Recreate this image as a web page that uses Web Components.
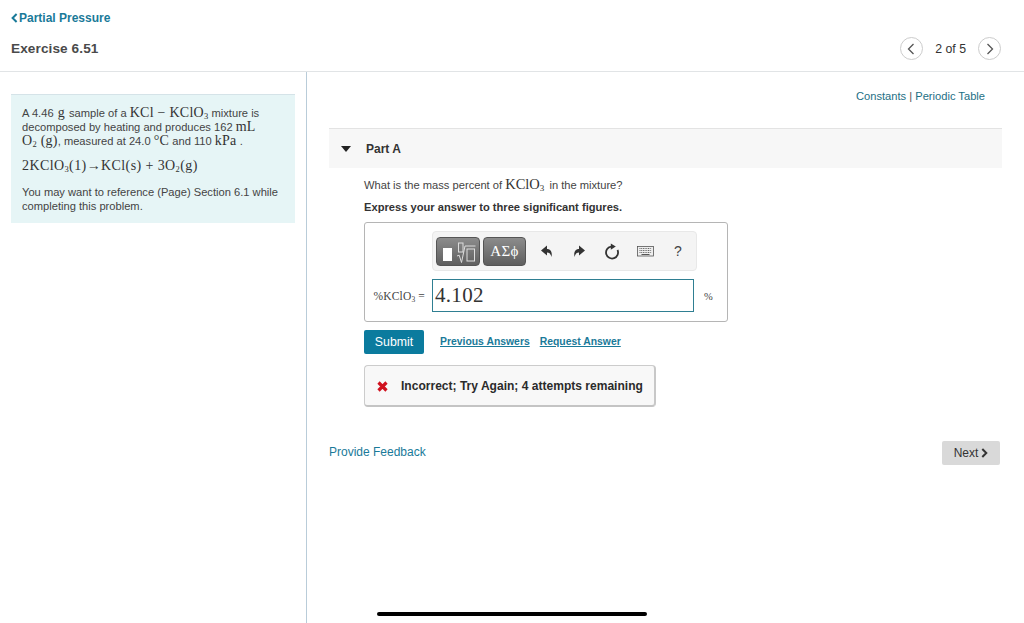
<!DOCTYPE html>
<html><head><meta charset="utf-8">
<style>
html,body{margin:0;padding:0;height:100%;background:#fff;overflow:hidden}
body{font-family:"Liberation Sans",Arial,sans-serif;color:#333}
</style></head><body>
<mp-page>
  <mp-header slot="header"></mp-header>
  <mp-intro slot="side"></mp-intro>
  <mp-toplinks slot="main"></mp-toplinks>
  <mp-part slot="main"></mp-part>
  <mp-answer slot="main"></mp-answer>
  <mp-actions slot="main"></mp-actions>
  <mp-feedback slot="main"></mp-feedback>
  <mp-footer slot="main"></mp-footer>
</mp-page>
<script>
function def(name, html){
  customElements.define(name, class extends HTMLElement{
    constructor(){super();this.attachShadow({mode:'open'}).innerHTML=html;}
  });
}
const M='font-family:"Liberation Serif","Times New Roman",serif;';
def('mp-page',`<style>
:host{display:flex;flex-direction:column;width:1024px;height:623px;position:relative;overflow:hidden}
.row{flex:1;display:flex;min-height:0}
.side{width:306px;border-right:1px solid #b9ccd9;box-sizing:content-box;padding-top:22px}
.main{flex:1;display:flex;flex-direction:column;padding:0 22px 0 22px}
.bar{position:absolute;left:377px;top:612px;width:270px;height:4px;border-radius:2px;background:#000}
</style>
<slot name="header"></slot>
<div class="row"><div class="side"><slot name="side"></slot></div><div class="main"><slot name="main"></slot></div></div>
<div class="bar"></div>`);
def('mp-header',`<style>
:host{display:flex;flex-direction:column;height:71px;border-bottom:1px solid #e1e4e6;padding:0 23px 0 11px;flex:none}
.crumb{display:flex;align-items:center;gap:1px;margin-top:11px;height:14px;font-size:12px;font-weight:700;color:#1a7a99}
.rowx{display:flex;align-items:center;justify-content:space-between;margin-top:9px;height:28px}
.title{font-size:13.6px;font-weight:700;color:#4a4a4a;letter-spacing:.1px}
.pg{display:flex;align-items:center;font-size:12.3px;color:#333;margin-top:1px}
.c{width:23px;height:23px;border:1px solid #ccc;border-radius:50%;display:flex;align-items:center;justify-content:center;box-sizing:border-box}
.t{margin:0 12px 0 12.5px}
</style>
<div class="crumb"><svg width="7" height="10" viewBox="0 0 7 10"><path d="M5.6 1L1.6 5l4 4" fill="none" stroke="#1a7a99" stroke-width="2"/></svg><span>Partial Pressure</span></div>
<div class="rowx"><div class="title">Exercise 6.51</div>
<div class="pg"><div class="c"><svg width="8" height="12" viewBox="0 0 8 12"><path d="M6.500 1L1.500 6l5 5" fill="none" stroke="#555" stroke-width="1.300"/></svg></div><span class="t">2 of 5</span><div class="c"><svg width="8" height="12" viewBox="0 0 8 12"><path d="M1.500 1l5 5-5 5" fill="none" stroke="#555" stroke-width="1.300"/></svg></div></div></div>`);
def('mp-intro',`<style>
:host{display:block;margin-left:11px;width:284px;box-sizing:border-box;height:129px;background:#e6f5f6;border-top:1px solid #d5e3e8;padding:11px 11px 0;font-size:11.15px;line-height:14px;color:#444}
.m{${M}font-size:14px;color:#333;line-height:0;letter-spacing:.25px}
.g{margin:0 1px}
sub{font-size:8.500px;line-height:0;vertical-align:-2px}
p{margin:0}
.eq{${M}font-size:14px;margin:9px 0 10px;line-height:18px;height:18px;letter-spacing:.4px;color:#333;white-space:nowrap}
</style>
<p>A 4.46 <span class="m g">g</span> sample of a <span class="m">KCl − KClO<sub>3</sub></span> mixture is<br>decomposed by heating and produces 162 <span class="m">mL</span><br><span class="m">O<sub>2</sub> (g)</span>, measured at 24.0 <span class="m">°C</span> and 110 <span class="m">kPa</span> .</p>
<div class="eq">2KClO<sub>3</sub>(1)→KCl(s) + 3O<sub>2</sub>(g)</div>
<p>You may want to reference (Page) Section 6.1 while<br>completing this problem.</p>`);
def('mp-toplinks',`<style>
:host{display:block;text-align:right;font-size:11.15px;line-height:14px;color:#1d6f85;padding:17px 17px 0 0;height:39px;white-space:nowrap}
</style>Constants <span style="color:#555">|</span> Periodic Table`);
def('mp-part',`<style>
:host{display:block}
.h{height:39px;border-top:1px solid #e3e3e3;background:#f7f7f7;display:flex;align-items:center;font-size:12px;font-weight:700;color:#333}
svg{margin:0 15px 0 12px}
.b{padding:0 0 0 35px;font-size:11.15px;color:#444}
.q{margin-top:8px;height:18px;line-height:18px}
.m{${M}font-size:14.500px;color:#333;line-height:0;margin-right:2px}
sub{font-size:9px;line-height:0;vertical-align:-2px}
.e{margin-top:7px;font-weight:700;color:#333;line-height:13px;height:13px}
</style>
<div class="h"><svg width="10" height="6" viewBox="0 0 10 6"><path d="M0 0h10L5 6z" fill="#222"/></svg><span>Part A</span></div>
<div class="b"><div class="q">What is the mass percent of <span class="m">KClO<sub>3</sub></span> in the mixture?</div>
<div class="e">Express your answer to three significant figures.</div></div>`);
def('mp-answer',`<style>
:host{display:block;margin:8px 0 0 35px;width:364px;height:100px;box-sizing:border-box;border:1px solid #b5b5b5;border-radius:3px;padding-top:8px}
.tb{display:flex;align-items:center;margin-left:67px;width:265px;height:40px;box-sizing:border-box;background:#f4f4f4;border:1px solid #e8e8e8;border-radius:4px;padding-left:3px}
.b{height:29px;border:1px solid #555;border-radius:4px;box-sizing:border-box;background:linear-gradient(#8c8c8c,#5f5f5f);display:flex;align-items:center;justify-content:center;color:#fff}
.b1{width:44px}.b2{width:43px;margin-left:3px;${M}font-size:15px;letter-spacing:.3px}
.i{display:flex;align-items:center;justify-content:center;flex:none}
.r{display:flex;align-items:center;margin-top:8px}
.l{width:67px;text-align:right;${M}font-size:11.500px;letter-spacing:.15px;color:#444;white-space:nowrap;box-sizing:border-box;padding-right:7px}
sub{font-size:7.500px;line-height:0;vertical-align:-2px}
.in{width:262px;height:33px;box-sizing:border-box;border:1px solid #2f7f92;${M}font-size:21px;line-height:31px;padding-left:2px;color:#333;letter-spacing:.3px}
.u{${M}font-size:10.500px;color:#444;margin-left:10px;margin-top:2px}
</style>
<div class="tb">
<div class="b b1"><svg width="42" height="27" viewBox="0 0 42 27"><rect x="6" y="10" width="9" height="13" fill="#fff"/><rect x="21.500" y="5" width="4.500" height="9" fill="none" stroke="#ddd" stroke-width="1"/><path d="M20 18l2.200-.8 2.300 7.300L28 8h10.500" fill="none" stroke="#ddd" stroke-width="1"/><rect x="30" y="11" width="7.500" height="12" fill="none" stroke="#ddd" stroke-width="1"/></svg></div>
<div class="b b2">ΑΣϕ</div>
<div class="i" style="width:20px;margin-left:11px"><svg width="14" height="15" viewBox="0 0 14 15"><path d="M7 1.500L1 6.500l6 5V8.500c2.400 0 3.700 1.200 4.400 4.500 1.200-4.500-.6-8-4.400-8z" fill="#333"/></svg></div>
<div class="i" style="width:20px;margin-left:12px"><svg width="14" height="15" viewBox="0 0 14 15"><path d="M7 1.500L13 6.500l-6 5V8.500c-2.400 0-3.700 1.200-4.400 4.500C1.400 8.500 3.200 5 7 5z" fill="#333"/></svg></div>
<div class="i" style="width:20px;margin-left:13px"><svg width="16" height="17" viewBox="0 0 16 17"><path d="M13.500 7A6 6 0 1 1 7 3.600" fill="none" stroke="#333" stroke-width="1.800"/><path d="M6.800 .4l5 3.200-5 3.200z" fill="#333"/></svg></div>
<div class="i" style="width:20px;margin-left:13px"><svg width="17" height="12" viewBox="0 0 17 12"><rect x=".5" y="1.500" width="16" height="9.500" fill="#eee" stroke="#555" stroke-width=".8"/><path d="M2.500 3.500h12M2.500 5.500h12M2.500 7.500h12" stroke="#666" stroke-width="1" stroke-dasharray="1 .7"/><path d="M4.500 9.500h8" stroke="#555"/></svg></div>
<div class="i" style="width:20px;margin-left:13px;font-size:14px;color:#444">?</div>
</div>
<div class="r"><div class="l">%KClO<sub>3</sub> =</div><div class="in">4.102</div><div class="u">%</div></div>`);
def('mp-actions',`<style>
:host{display:flex;align-items:flex-start;margin:8px 0 0 35px;height:24px}
.s{width:60px;height:24px;background:#0b7b9e;border-radius:2px;color:#fff;font-size:12.300px;display:flex;align-items:center;justify-content:center}
a{font-size:10.400px;line-height:23px;font-weight:700;color:#1a7a99;text-decoration:underline}
.p{margin-left:16px}.q{margin-left:10px}
</style><div class="s">Submit</div><a class="p">Previous Answers</a><a class="q">Request Answer</a>`);
def('mp-feedback',`<style>
:host{display:flex;align-items:center;margin:11px 0 0 35px;width:292px;height:42px;box-sizing:border-box;background:#f8f8f8;border:1px solid #ccc;border-bottom:2px solid #c4c4c4;border-right:2px solid #c8c8c8;border-radius:4px;padding-top:1px;font-size:12.050px;font-weight:700;color:#2b2b2b}
svg{margin:0 13px 0 12px}
</style><svg width="11" height="11" viewBox="0 0 11 11"><path d="M1.500 1.500l8 8M9.500 1.500l-8 8" stroke="#d0121f" stroke-width="3.200" fill="none"/></svg><span>Incorrect; Try Again; 4 attempts remaining</span>`);
def('mp-footer',`<style>
:host{display:flex;justify-content:space-between;align-items:center;margin-top:34px;height:24px;font-size:12px;color:#1a7a99}
span{padding-bottom:2px}
.n{width:58px;height:24px;background:#d9d9d9;border-radius:2px;color:#333;font-size:12px;display:flex;align-items:center;justify-content:center;gap:3px;margin-right:2px}
</style><span>Provide Feedback</span><div class="n">Next<svg width="7" height="10" viewBox="0 0 7 10"><path d="M1.300 1l4 4-4 4" fill="none" stroke="#333" stroke-width="2"/></svg></div>`);
</script>
</body></html>
